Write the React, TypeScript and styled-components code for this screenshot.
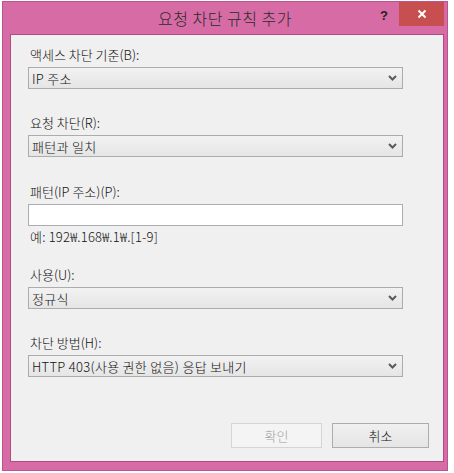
import React from "react";
import styled, { createGlobalStyle } from "styled-components";

const GlobalStyle = createGlobalStyle`
  html, body {
    margin: 0;
    padding: 0;
    background: #ffffff;
  }
  body {
    font-family: "Noto Sans CJK KR", "Noto Sans", "Liberation Sans", sans-serif;
    font-weight: 300;
  }
`;

const Chevron = () => (
  <svg width="9" height="6" viewBox="0 0 9 6">
    <path d="M1 1 L4.5 4.5 L8 1" fill="none" stroke="#5a5a5a" strokeWidth="2" />
  </svg>
);

type FieldProps = {
  label: string;
  value?: string;
  kind: "select" | "input";
  top: number;
  hint?: string;
};

const Field = ({ label, value, kind, top, hint }: FieldProps) => (
  <Group $top={top}>
    <Label>{label}</Label>
    {kind === "select" ? (
      <Select>
        <span>{value}</span>
        <Chevron />
      </Select>
    ) : (
      <TextBox />
    )}
    {hint && <Hint>{hint}</Hint>}
  </Group>
);

const App = () => {
  return (
    <>
      <GlobalStyle />
      <Window>
        <TitleBar>
          <Title>요청 차단 규칙 추가</Title>
          <Help>?</Help>
          <Close>
            <svg width="10" height="10" viewBox="0 0 10 10">
              <path d="M1.5 1.5 L8.5 8.5 M8.5 1.5 L1.5 8.5" stroke="#fff" strokeWidth="2" />
            </svg>
          </Close>
        </TitleBar>
        <Body>
          <Form>
            <Field top={12} label="액세스 차단 기준(B):" kind="select" value="IP 주소" />
            <Field top={26} label="요청 차단(R):" kind="select" value="패턴과 일치" />
            <Field top={27} label="패턴(IP 주소)(P):" kind="input" hint="예: 192₩.168₩.1₩.[1-9]" />
            <Field top={22} label="사용(U):" kind="select" value="정규식" />
            <Field top={26} label="차단 방법(H):" kind="select" value="HTTP 403(사용 권한 없음) 응답 보내기" />
          </Form>
          <Footer>
            <Button disabled>확인</Button>
            <Button $wide>취소</Button>
          </Footer>
        </Body>
      </Window>
    </>
  );
};

export default App;

const Window = styled.div`
  margin: 1px 0 0 2px;
  width: 446px;
  height: 470px;
  box-sizing: border-box;
  background: #d66ba5;
  border: 1px solid #b9548d;
  display: flex;
  flex-direction: column;
`;

const TitleBar = styled.div`
  position: relative;
  height: 32px;
  flex-shrink: 0;
  display: flex;
  justify-content: center;
  align-items: center;
`;

const Title = styled.div`
  font-size: 16px;
  color: #2b2b2b;
  letter-spacing: 0.5px;
  margin-top: -1px;
`;

const Help = styled.div`
  position: absolute;
  right: 59px;
  top: 6px;
  font-family: "Liberation Sans", sans-serif;
  font-weight: 700;
  font-size: 13px;
  color: #222;
`;

const Close = styled.div`
  position: absolute;
  right: 3px;
  top: 0;
  width: 45px;
  height: 24px;
  background: #c74f50;
  display: flex;
  align-items: center;
  justify-content: center;
`;

const Body = styled.div`
  flex: 1;
  margin: 0 3px 8px 7px;
  background: #f0f0f0;
  border: 1px solid #b04b84;
  display: flex;
  flex-direction: column;
  justify-content: space-between;
`;

const Form = styled.div`
  display: flex;
  flex-direction: column;
  padding: 0 40px 0 17px;
`;

const Group = styled.div<{ $top: number }>`
  display: flex;
  flex-direction: column;
  margin-top: ${(p) => p.$top}px;
`;

const Label = styled.div`
  font-size: 13px;
  line-height: 16px;
  color: #111;
  margin-bottom: 4px;
  padding-left: 2px;
`;

const Select = styled.div`
  height: 22px;
  box-sizing: border-box;
  border: 1px solid #acacac;
  background: linear-gradient(#f2f2f2, #e5e5e5);
  display: flex;
  align-items: center;
  justify-content: space-between;
  padding: 0 5px 0 3px;
  font-size: 13px;
  letter-spacing: 0.3px;
  color: #111;
`;

const TextBox = styled.div`
  height: 22px;
  box-sizing: border-box;
  border: 1px solid #abadb3;
  background: #fff;
`;

const Hint = styled.div`
  font-size: 13px;
  line-height: 16px;
  color: #111;
  margin-top: 3px;
  padding-left: 2px;
  letter-spacing: 0.2px;
`;

const Footer = styled.div`
  display: flex;
  justify-content: flex-end;
  gap: 10px;
  padding: 0 14px 13px 0;
`;

const Button = styled.button<{ $wide?: boolean }>`
  width: ${(p) => (p.$wide ? 97 : 91)}px;
  height: 25px;
  box-sizing: border-box;
  font-family: inherit;
  font-weight: 300;
  font-size: 13px;
  color: #111;
  border: 1px solid #adadad;
  background: linear-gradient(#f0f0f0, #e5e5e5);
  padding: 0;

  &:disabled {
    color: #a0a0a0;
    border-color: #d5d5d5;
    background: #f4f4f4;
  }
`;
